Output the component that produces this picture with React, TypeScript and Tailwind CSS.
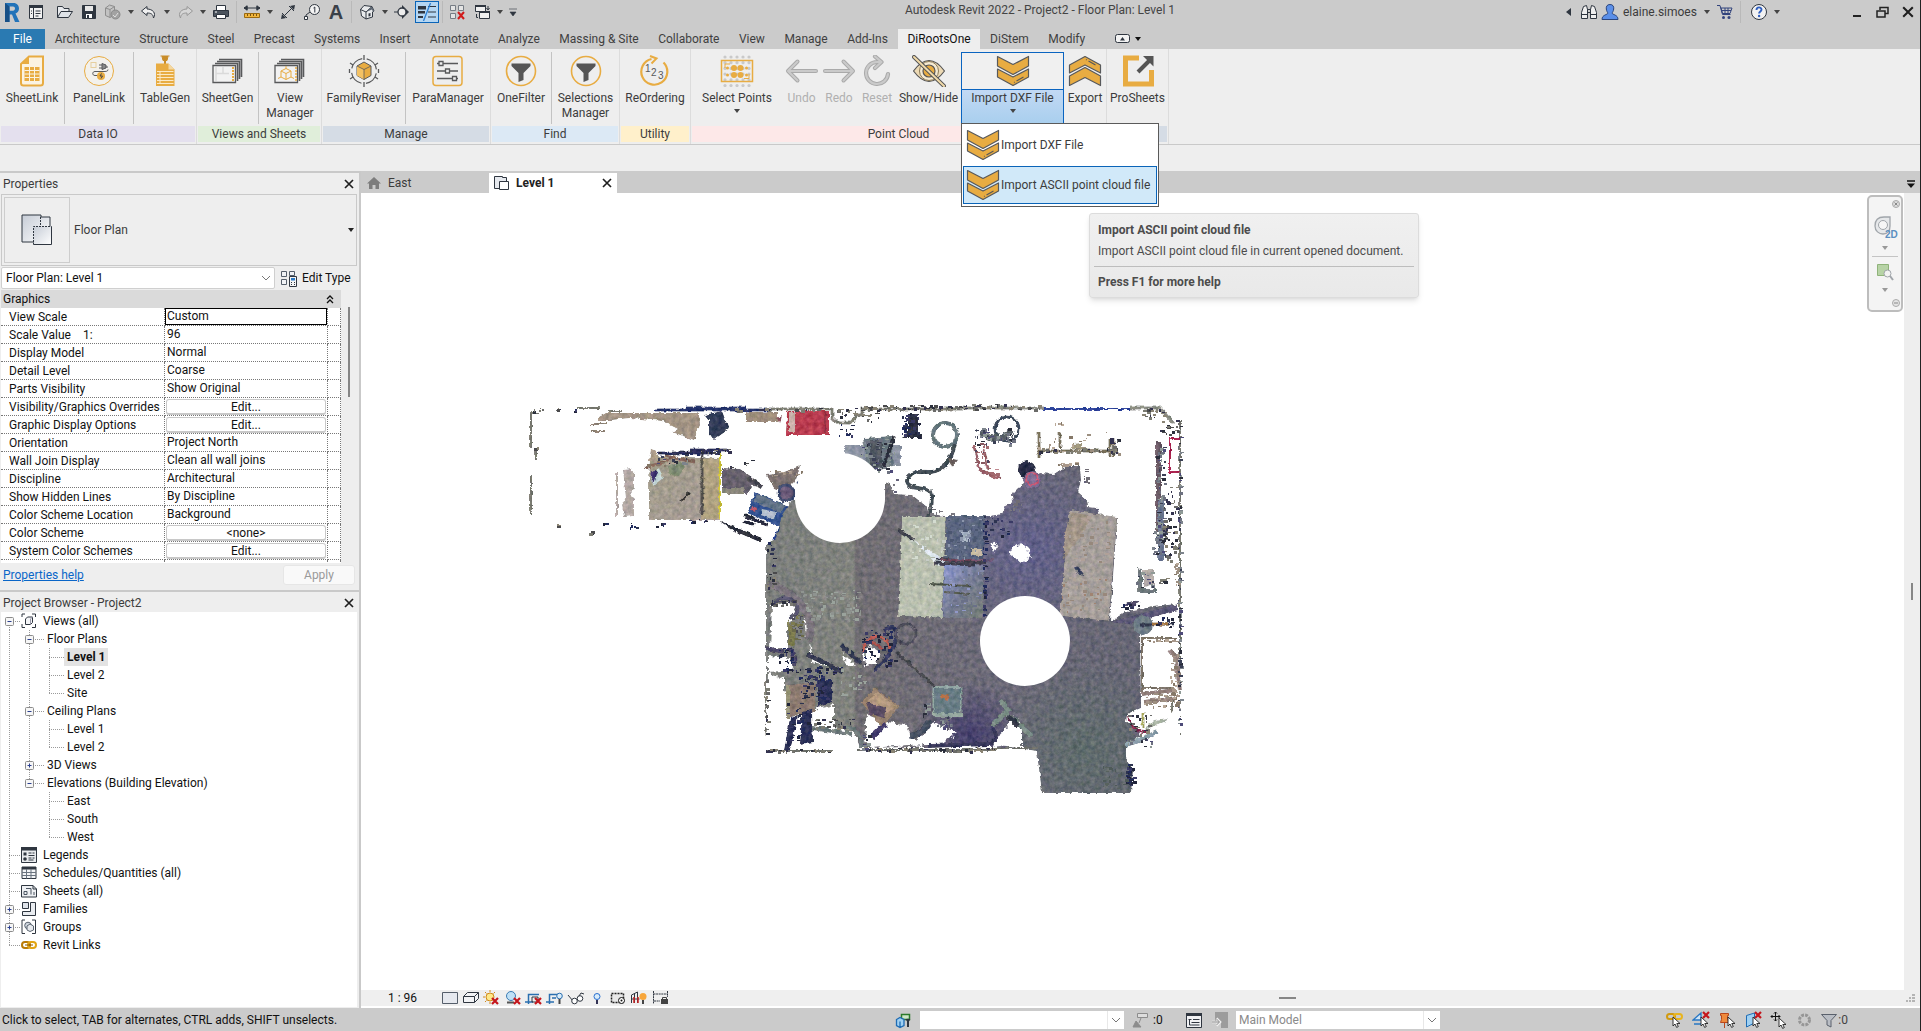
import React from "react";

type Kids = { children?: React.ReactNode };

function Svg({ w = 18, h = 18, vb, children }: Kids & { w?: number; h?: number; vb?: string }) {
  return (
    <svg width={w} height={h} viewBox={vb ?? `0 0 ${w} ${h}`} fill="none" aria-hidden="true" className="shrink-0">
      {children}
    </svg>
  );
}

const INK = "#2f3640";
const GOLD = "#e8ac42";
const GREY = "#58595b";

/* ---------- small shared marks ---------- */

const Tri = ({ c = "#444" }: { c?: string }) => (
  <Svg w={6} h={4}>
    <path d="M0 0h6L3 4z" fill={c} />
  </Svg>
);

const Close = ({ size = 10 }: { size?: number }) => (
  <Svg w={size} h={size} vb="0 0 10 10">
    <path d="M1 1l8 8M9 1L1 9" stroke="#1f1f1f" strokeWidth="1.7" />
  </Svg>
);

const Chevron = () => (
  <Svg w={10} h={6}>
    <path d="M1 1l4 4 4-4" stroke="#777" />
  </Svg>
);

const Cursor = ({ x = 8, y = 6 }: { x?: number; y?: number }) => (
  <path transform={`translate(${x} ${y})`} d="M0 0v9l2-2 1.6 3.4 1.7-.8L3.800 6.500H7z" fill="#fff" stroke="#222" strokeWidth=".9" />
);

const RedX = ({ x, y }: { x: number; y: number }) => (
  <path transform={`translate(${x} ${y})`} d="M0 0l6 6M6 0L0 6" stroke="#c4161c" strokeWidth="2.200" />
);

/* ---------- quick access toolbar ---------- */

const Q = {
  logo: (
    <Svg w={16} h={22}>
      <path d="M1 2h8.500C13 2 15 4.500 15 7.500c0 2.700-1.500 4.300-3.500 5L15.500 21H11L8 13.500H5.500V21H1z" fill="#2273b9" />
      <path d="M5.500 5.500H9c1.200 0 2 .8 2 2s-.8 2.300-2 2.300H5.500z" fill="#cbcbcb" />
      <path d="M1 2l4.500 3.500V21H1z" fill="#174f86" />
    </Svg>
  ),
  menu: (
    <Svg w={16} h={18}>
      <path d="M1.500 2.500h13v13h-13z" fill="#f2f2f2" stroke={INK} />
      <path d="M1 2h14v3H1z" fill={INK} />
      <path d="M5.500 5v10M7.500 8h5M7.500 10.500h5M7.500 13h3M3 8h1M3 10.500h1" stroke={INK} />
    </Svg>
  ),
  open: (
    <Svg w={18} h={16}>
      <path d="M1.500 13.500v-11h5l1.500 2h5v2.500" fill="#e9ebee" stroke={INK} />
      <path d="M1.500 13.500l3.500-6h11.500l-4 6z" fill="#dfe3e8" stroke={INK} />
    </Svg>
  ),
  save: (
    <Svg w={16} h={18}>
      <path d="M1.500 2.500h13v13h-13z" fill={INK} stroke={INK} />
      <path d="M4 3h8v5H4z" fill="#e8e8e8" />
      <path d="M5 11h6v4H5z" fill="#fff" />
      <path d="M6 12h2v3H6z" fill={INK} />
    </Svg>
  ),
  sync: (
    <Svg w={18} h={18}>
      <path d="M1.500 5l4-3 5 1.500v8l-4.500 3-4.500-2zM6 6.500v8M1.500 5L6 6.500l4.500-3" fill="#c2c2c2" stroke="#8d8d8d" />
      <circle cx="11.500" cy="11.500" r="4.500" fill="#a2a2a2" stroke="#8a8a8a" />
      <path d="M9 12l2 2 3-4" stroke="#dedede" />
    </Svg>
  ),
  undo: (
    <Svg w={18} h={16}>
      <path d="M7 2.500L1.500 7 7 11.500V9c4 0 6 1 6.500 5 3-5-1-9-6.500-9z" fill="#f0f0f0" stroke={INK} strokeLinejoin="round" />
    </Svg>
  ),
  redo: (
    <Svg w={18} h={16}>
      <path d="M11 2.500L16.500 7 11 11.500V9c-4 0-6 1-6.500 5-3-5 1-9 6.500-9z" fill="#d6d6d6" stroke="#989898" strokeLinejoin="round" />
    </Svg>
  ),
  print: (
    <Svg w={18} h={18}>
      <path d="M4.500 2.500h9v5h-9z" fill="#fff" stroke={INK} />
      <path d="M1.500 7.500h15v6h-15z" fill="#4c545e" stroke={INK} />
      <path d="M4.500 11.500h9v4h-9z" fill="#fff" stroke={INK} />
      <path d="M3 9h2" stroke="#fff" />
    </Svg>
  ),
  ruler: (
    <Svg w={18} h={16}>
      <path d="M1 4h16M4 1.500v5M14 1.500v5M1 4l3-2v4zM17 4l-3-2v4z" stroke={INK} fill={INK} />
      <path d="M1.500 9.500h15v4h-15z" fill="#f2b63d" stroke="#9a6a10" />
      <path d="M4.500 10v2M7.500 10v2M10.500 10v2M13.500 10v2" stroke="#7a5310" />
    </Svg>
  ),
  dim: (
    <Svg w={18} h={18}>
      <path d="M4 14L14 4M3 10l5 5M10 3l5 5" stroke={INK} />
      <path d="M2 16l1-5 4 4zM16 2l-1 5-4-4z" fill={INK} />
    </Svg>
  ),
  tag: (
    <Svg w={18} h={18}>
      <circle cx="11.500" cy="6.500" r="5" fill="#f4f4f4" stroke={INK} />
      <path d="M10.500 5l1.300-1v5.500M7 9l-4 3v3" stroke={INK} />
      <path d="M1.500 13.500h3v3h-3z" fill="#fff" stroke={INK} />
    </Svg>
  ),
  house: (
    <Svg w={18} h={18}>
      <path d="M2.500 6.500L6 2.500l8 1 2 4.500-1.500 1v5l-6.500 2-4.500-3z" fill="#e8eaec" stroke={INK} />
      <path d="M2.500 6.500L8 9l6-5.500M8 9v7" stroke={INK} />
      <path d="M8 9l6-5.500 2 4.500-1 1-1-2.500z" fill="#5c6570" />
      <path d="M10.500 10.500l2-.6v3l-2 .6z" fill={INK} />
    </Svg>
  ),
  section: (
    <Svg w={18} h={16}>
      <path d="M8 1l7 7-7 7z" fill={INK} />
      <circle cx="8" cy="8" r="4" fill="#ececec" stroke={INK} strokeWidth="1.300" />
      <path d="M0 8h4" stroke={INK} />
    </Svg>
  ),
  thin: (
    <Svg w={20} h={18}>
      <path d="M1 3h8v3.500H1zM1 8h7v2.500H1zM1 13h5v2H1z" fill={INK} />
      <path d="M11 3.500h8M11 9h8M11 14h8" stroke={INK} />
      <path d="M13.500 0L6.500 18" stroke="#2a7fd4" strokeWidth="1.300" />
    </Svg>
  ),
  closeHidden: (
    <Svg w={18} h={18}>
      <path d="M1.500 2.500h5v5h-5zM9.500 2.500h5v5h-5zM1.500 10.500h5v5h-5z" fill="#e4e4e4" stroke="#767c84" />
      <path d="M9 9l6 7M15 9l-6 7" stroke="#d11a1a" strokeWidth="2" />
    </Svg>
  ),
  switchWin: (
    <Svg w={18} h={18}>
      <path d="M2.500 2.500h10v6h-10zM6.500 8.500h10v7h-10z" fill="#f0f0f0" stroke={INK} />
      <path d="M2 2h11v2H2zM6 8h11v2H6z" fill={INK} />
      <path d="M15 3v3M13.500 5l1.500 2 1.500-2M3.500 11v3.500H5" stroke={INK} />
    </Svg>
  ),
};

function IconButton({ label, children, active }: Kids & { label: string; active?: boolean }) {
  return (
    <button
      aria-label={label}
      className={
        active
          ? "flex h-[22px] w-6 items-center justify-center border border-[#0a64b8] bg-[#b5d6f2]"
          : "flex h-[22px] w-6 items-center justify-center"
      }
    >
      {children}
    </button>
  );
}

const DropTri = ({ label }: { label: string }) => (
  <button aria-label={label} className="flex h-[22px] w-3 items-center justify-center">
    <Tri />
  </button>
);

const Sep = () => <span className="mx-[3px] h-[22px] w-px bg-[#b9b9b9]" />;

function TitleBar() {
  return (
    <header className="flex h-[29px] items-start justify-between bg-[#cbcbcb]">
      <div className="flex w-[520px] items-center pt-[1px]">
        <IconButton label="Revit">{Q.logo}</IconButton>
        <IconButton label="Recent files">{Q.menu}</IconButton>
        <span className="w-[5px]" />
        <IconButton label="Open">{Q.open}</IconButton>
        <IconButton label="Save">{Q.save}</IconButton>
        <IconButton label="Synchronize">{Q.sync}</IconButton>
        <DropTri label="Synchronize options" />
        <IconButton label="Undo action">{Q.undo}</IconButton>
        <DropTri label="Undo history" />
        <IconButton label="Redo action">{Q.redo}</IconButton>
        <DropTri label="Redo history" />
        <IconButton label="Print">{Q.print}</IconButton>
        <Sep />
        <IconButton label="Measure">{Q.ruler}</IconButton>
        <DropTri label="Measure options" />
        <IconButton label="Aligned dimension">{Q.dim}</IconButton>
        <IconButton label="Tag by category">{Q.tag}</IconButton>
        <button aria-label="Text" className="w-6 font-['Liberation_Sans'] text-[20px] leading-[22px] font-bold text-[#3a4048]">
          A
        </button>
        <Sep />
        <IconButton label="Default 3D view">{Q.house}</IconButton>
        <DropTri label="3D view options" />
        <IconButton label="Section">{Q.section}</IconButton>
        <IconButton label="Thin lines" active>{Q.thin}</IconButton>
        <Sep />
        <IconButton label="Close inactive views">{Q.closeHidden}</IconButton>
        <IconButton label="Switch windows">{Q.switchWin}</IconButton>
        <DropTri label="Switch windows options" />
        <button aria-label="Customize toolbar" className="ml-px flex w-3 justify-center">
          <Svg w={8} h={8}>
            <path d="M0 1h8M1 4h6L4 8z" fill={INK} stroke={INK} strokeWidth=".6" />
          </Svg>
        </button>
      </div>
      <h1 className="pt-[2px] text-[12px] leading-4 text-[#444]">Autodesk Revit 2022 - Project2 - Floor Plan: Level 1</h1>
      <div className="flex w-[360px] items-center pt-[1px]">
        <button aria-label="Collapse search" className="mr-[6px] ml-[6px]">
          <Svg w={5} h={8}>
            <path d="M5 0v8L0 4z" fill={INK} />
          </Svg>
        </button>
        <IconButton label="Search">
          <Svg w={18} h={18}>
            <path d="M3.500 3.500l3-1 1 4v9h-6v-6zM14.500 3.500l-3-1-1 4v9h6v-6z" fill="#efefef" stroke={INK} />
            <path d="M7.500 6.500h3v3h-3zM1.500 11.500h6M10.500 11.500h6" stroke={INK} />
          </Svg>
        </IconButton>
        <button className="flex h-[22px] w-[100px] items-center gap-1 text-[12px] text-[#3c3c3c]">
          <Svg w={18} h={18}>
            <path d="M9 1.500c3 0 4 2 3.700 4.500-.3 2-1.200 3.500-1.700 4 .5 2 6 1.500 6 6.500H1c0-5 5.500-4.500 6-6.500-.5-.5-1.400-2-1.700-4C5 3.500 6 1.500 9 1.500z" fill="#5b8fe8" stroke="#2b457c" />
          </Svg>
          elaine.simoes
        </button>
        <DropTri label="Account options" />
        <IconButton label="App store">
          <Svg w={18} h={18}>
            <path d="M1 2.500h3l2.500 9h8M5 5h11l-2 5.500H6.500zM6 7.500h9M9 5v5.500M12 5v5.500" stroke="#33447c" />
            <circle cx="7.500" cy="14.500" r="1.500" fill="#33447c" />
            <circle cx="13" cy="14.500" r="1.500" fill="#33447c" />
          </Svg>
        </IconButton>
        <Sep />
        <span className="w-[3px]" />
        <IconButton label="Help">
          <Svg w={18} h={18}>
            <circle cx="9" cy="9" r="7.500" fill="#f2f2f2" stroke={INK} />
            <path d="M6.500 7c0-3.500 5-3.300 5-.5 0 2-2.400 1.800-2.400 4" stroke="#2f5fc0" strokeWidth="1.900" />
            <circle cx="9.100" cy="13" r="1.200" fill="#2f5fc0" />
          </Svg>
        </IconButton>
        <DropTri label="Help options" />
        <div className="ml-auto flex items-center gap-[13px] pr-[6px]">
          <button aria-label="Minimize">
            <Svg w={10} h={12}>
              <path d="M0 10h8" stroke="#222" strokeWidth="2" />
            </Svg>
          </button>
          <button aria-label="Restore">
            <Svg w={13} h={12}>
              <path d="M4 4V1.500h8v6H9" stroke="#222" strokeWidth="1.500" />
              <path d="M1 5h8v6H1z" stroke="#222" strokeWidth="1.500" />
            </Svg>
          </button>
          <button aria-label="Close window">
            <Close size={12} />
          </button>
        </div>
      </div>
    </header>
  );
}

const TABS = [
  "Architecture", "Structure", "Steel", "Precast", "Systems", "Insert", "Annotate", "Analyze", "Massing & Site",
  "Collaborate", "View", "Manage", "Add-Ins", "DiRootsOne", "DiStem", "Modify",
];

function RibbonTabs() {
  return (
    <nav className="flex h-5 bg-[#cbcbcb] text-[12px] text-[#3f3f3f]">
      <button className="w-[45px] bg-[#2a7ab2] text-white">File</button>
      <div className="flex w-[1050px]">
        {TABS.map((t) => (
          <button
            key={t}
            className={
              t === "DiRootsOne"
                ? "flex-auto bg-[#eeeeee] text-center whitespace-nowrap text-[#111]"
                : "flex-auto text-center whitespace-nowrap"
            }
          >
            {t}
          </button>
        ))}
      </div>
      <button aria-label="Minimize ribbon" className="ml-5 flex items-center gap-1">
        <Svg w={16} h={10}>
          <rect x=".5" y=".5" width="14" height="8" rx="2" fill="#f2f2f2" stroke={INK} />
          <path d="M5 6.500h5L7.500 3z" fill={INK} />
        </Svg>
        <Tri c="#111" />
      </button>
    </nav>
  );
}

/* ---------- ribbon icons, 34 x 32 ---------- */

const Chevrons = ({ up }: { up?: boolean }) => (
  <Svg w={34} h={32}>
    <g transform={up ? "translate(0 32) scale(1 -1)" : undefined} fill={GOLD} stroke={GREY} strokeWidth="1.200" strokeLinejoin="round">
      <path d="M1.500 1.500L17 9.500l15.500-8v9.500L17 19.500 1.500 11z" />
      <path d="M1.500 14L17 22l15.500-8v8L17 30.500 1.500 22z" />
      <path d="M20.500 26l7-4M18 27.500l.7-.4" fill="none" />
    </g>
  </Svg>
);

const FilterIcon = () => (
  <Svg w={34} h={32}>
    <circle cx="17" cy="16" r="14.500" stroke={GOLD} strokeWidth="1.600" />
    <path d="M7.500 8.500h19v2.500l-7 7V25l-5 2v-9l-7-7z" fill="#555" />
  </Svg>
);

const Pages = ({ children }: Kids) => (
  <Svg w={34} h={32}>
    <path d="M8 4.500h22.500V22M6 6.500h22.500V24M4 8.500h22.500V26" stroke={GREY} strokeWidth="1.600" />
    <path d="M2 10.500h22.500v17H2z" fill="#f2f2f2" stroke={GREY} strokeWidth="1.300" />
    {children}
  </Svg>
);

const Sliders = () => (
  <Svg w={34} h={32}>
    <rect x="2" y="1.500" width="29" height="29" rx="3" stroke={GOLD} strokeWidth="1.500" />
    <path d="M6 8.500h21M6 16h21M6 23.500h21" stroke={GREY} strokeWidth="1.600" />
    <path d="M8 6.500h4v4H8zM14.500 14h4v4h-4zM21.500 21.500h4v4h-4z" fill="#eee" stroke={GREY} strokeWidth="1.300" />
  </Svg>
);

const R: Record<string, React.ReactNode> = {
  SheetLink: (
    <Svg w={34} h={32}>
      <path d="M6 9l8-7.500h14V28q0 2.500-2.500 2.500h-17Q6 30.500 6 28z" fill="#fbf3e2" stroke={GOLD} strokeWidth="2" />
      <path d="M6 9l8-7.500V9z" fill={GOLD} />
      <path d="M9.500 12h15v14h-15z" fill={GOLD} />
      <path d="M9.500 15.500h15M9.500 19h15M9.500 22.500h15M14.500 12v14M19.500 12v14" stroke="#fbf3e2" />
    </Svg>
  ),
  PanelLink: (
    <Svg w={34} h={32}>
      <circle cx="17" cy="16" r="14.500" fill="#f3f1ec" stroke={GOLD} />
      <rect x="9" y="7.500" width="5" height="5" stroke="#e6cf9f" />
      <path d="M17 10h3M17 13h3M26 12h-2M20 8.500l4 1.500v3l-4 1.500z" stroke={GREY} fill="#888" />
      <path d="M26 14.500c0 2-2 2-5 2H13c-3 0-3 4 0 4h3" stroke={GREY} />
      <circle cx="19" cy="21" r="4" fill={GOLD} />
      <path d="M19.500 18.500L18 21h2.500L19 23.500" stroke="#444" />
    </Svg>
  ),
  TableGen: (
    <Svg w={34} h={32}>
      <path d="M12.500 1h9M14 1.500h6l-1 4h-4z" fill="#c98d2a" stroke="#c98d2a" />
      <path d="M17 5v4" stroke="#c98d2a" strokeWidth="2" />
      <path d="M8 8.500h12.500l6 6V31H8z" fill={GOLD} />
      <path d="M20.500 8.500v6h6z" fill="#f4d8a2" />
      <path d="M9 16.500h16.500M9 19.500h16.500M9 22.500h16.500M9 25.500h16.500M9 28.500h16.500M12 16.500v12" stroke="#fbe9c6" />
    </Svg>
  ),
  SheetGen: (
    <Pages>
      <path d="M5 12v14M5 18.500h13M12 12v6" stroke="#dadada" strokeWidth="1.500" />
      <path d="M22 12v14" stroke={GOLD} strokeWidth="2" strokeDasharray="2 1" />
    </Pages>
  ),
  View: (
    <Pages>
      <path d="M13 13.500l5 2.500v6l-5 2.500L8 22v-6zM8 16l5 2.500 5-2.500M13 18.500v6M13 11v2.500M18 22l3 1.500M8 22l-3 1.500" stroke={GOLD} />
      <path d="M23 12v14" stroke={GOLD} strokeWidth="1.500" strokeDasharray="2 1" />
    </Pages>
  ),
  FamilyReviser: (
    <Svg w={34} h={32}>
      <circle cx="17" cy="16" r="12.500" stroke={GREY} strokeWidth="1.200" strokeDasharray="15 4.600" strokeDashoffset="-2.500" />
      <path d="M17 0v5M17 27v5M3 8l3 2M31 8l-3 2M3 24l3-2M31 24l-3-2M2.500 14v4M31.500 14v4" stroke={GREY} strokeWidth="1.300" />
      <path d="M17 7l7 4v9.500l-7 4-7-4V11z" fill={GOLD} stroke={GREY} />
      <path d="M10 11l7 3.500v10l-7-4z" fill="#f4c264" />
      <path d="M10 11l7 3.500 7-3.500M17 14.500v10" stroke={GREY} strokeWidth=".8" />
    </Svg>
  ),
  ParaManager: <Sliders />,
  OneFilter: <FilterIcon />,
  Selections: <FilterIcon />,
  ReOrdering: (
    <Svg w={34} h={32}>
      <path d="M25.500 7.500a13 13 0 1 1-12-3.500" stroke={GOLD} strokeWidth="2.200" />
      <path d="M12 1l6.500 2.500-5 5" stroke={GOLD} strokeWidth="2" />
      <g fill={GREY} fontFamily="Liberation Sans" fontSize="10">
        <text x="7" y="17">1</text>
        <text x="13" y="21">2</text>
        <text x="20" y="24">3</text>
      </g>
    </Svg>
  ),
  "Select Points": (
    <Svg w={34} h={32}>
      <g fill="#c9c9c9">
        {[0, 1, 2, 3, 4].map((c) =>
          [0, 1, 2, 3, 4, 5].map((r) => <circle key={`${c}-${r}`} cx={5 + c * 6} cy={2 + r * 5.700} r="1.600" />),
        )}
      </g>
      <path d="M1.500 5.500h31v21h-31z" stroke={GOLD} strokeWidth="1.500" />
      <path d="M10 9H5v4M24 23.500h5V19" stroke={GOLD} />
      <g fill={GOLD}>
        <circle cx="14" cy="13" r="3" /><circle cx="20.500" cy="13" r="3" />
        <circle cx="14" cy="20" r="3" /><circle cx="20.500" cy="20" r="3" />
        <circle cx="7.500" cy="13" r="1.500" /><circle cx="26.500" cy="13" r="1.500" />
        <circle cx="7.500" cy="20" r="1.500" /><circle cx="26.500" cy="20" r="1.500" />
      </g>
    </Svg>
  ),
  Undo: (
    <Svg w={34} h={32}>
      <path d="M31 16H4M12.500 6.500L3 16l9.500 9.500" stroke="#aaa" strokeWidth="4" strokeLinecap="round" strokeLinejoin="round" />
      <path d="M31 16H4M12.500 6.500L3 16l9.500 9.500" stroke="#cacaca" strokeWidth="2" strokeLinecap="round" strokeLinejoin="round" />
    </Svg>
  ),
  Redo: (
    <Svg w={34} h={32}>
      <path d="M3 16h27M21.500 6.500L31 16l-9.500 9.500" stroke="#aaa" strokeWidth="4" strokeLinecap="round" strokeLinejoin="round" />
      <path d="M3 16h27M21.500 6.500L31 16l-9.500 9.500" stroke="#cacaca" strokeWidth="2" strokeLinecap="round" strokeLinejoin="round" />
    </Svg>
  ),
  Reset: (
    <Svg w={34} h={32}>
      <path d="M28 19a11 11 0 1 1-11-12h4M15 1.500L21.500 7 15 13" stroke="#aaa" strokeWidth="4.200" strokeLinecap="round" strokeLinejoin="round" />
      <path d="M28 19a11 11 0 1 1-11-12h4M15 1.500L21.500 7 15 13" stroke="#cacaca" strokeWidth="2.200" strokeLinecap="round" strokeLinejoin="round" />
    </Svg>
  ),
  "Show/Hide": (
    <Svg w={34} h={32}>
      <path d="M1.500 16q15.500-21 31 0-15.500 21-31 0z" fill="#ecd9b4" stroke="#555" strokeWidth="1.200" />
      <circle cx="17" cy="16" r="9.500" fill="#f5ead2" stroke="#8a7a58" />
      <circle cx="17" cy="16" r="6" fill={GOLD} stroke="#555" strokeWidth="1.200" />
      <path d="M2 2l30 29" stroke="#555" strokeWidth="4" strokeLinecap="round" />
      <path d="M2 2l30 29" stroke="#f0d9a8" strokeWidth="2" strokeLinecap="round" />
    </Svg>
  ),
  "Import DXF File": <Chevrons />,
  Export: <Chevrons up />,
  ProSheets: (
    <Svg w={34} h={32}>
      <path d="M18 3H4.500v26h26V15" stroke={GOLD} strokeWidth="5" />
      <path d="M17 17L29 5" stroke="#555" strokeWidth="4" />
      <path d="M22 1h10.500v10.500z" fill="#555" />
    </Svg>
  ),
};

type Tool = { name: string; second?: string; w: string; off?: boolean; drop?: boolean; line?: boolean };

const GROUPS: { label: string; w: string; bg: string; tools: Tool[] }[] = [
  { label: "Data IO", w: "w-[197px]", bg: "bg-[#e4e0ee]", tools: [
    { name: "SheetLink", w: "w-[65px]", line: true }, { name: "PanelLink", w: "w-[69px]", line: true }, { name: "TableGen", w: "w-[62px]" } ] },
  { label: "Views and Sheets", w: "w-[125px]", bg: "bg-[#e0eeda]", tools: [
    { name: "SheetGen", w: "w-[62px]", line: true }, { name: "View", second: "Manager", w: "w-[62px]" } ] },
  { label: "Manage", w: "w-[169px]", bg: "bg-[#d5dce5]", tools: [
    { name: "FamilyReviser", w: "w-[84px]", line: true }, { name: "ParaManager", w: "w-[84px]" } ] },
  { label: "Find", w: "w-[129px]", bg: "bg-[#dce9f5]", tools: [
    { name: "OneFilter", w: "w-[61px]", line: true }, { name: "Selections", second: "Manager", w: "w-[67px]" } ] },
  { label: "Utility", w: "w-[71px]", bg: "bg-[#fff0cb]", tools: [{ name: "ReOrdering", w: "w-[70px]" }] },
  { label: "Point Cloud", w: "w-[416px]", bg: "bg-[#fde8e8]", tools: [
    { name: "Select Points", w: "w-[92px]", drop: true }, { name: "Undo", w: "w-[37px]", off: true },
    { name: "Redo", w: "w-[38px]", off: true }, { name: "Reset", w: "w-[38px]", off: true },
    { name: "Show/Hide", w: "w-[65px]" }, { name: "Import DXF File", w: "w-[103px]", drop: true }, { name: "Export", w: "w-[42px]" } ] },
  { label: "", w: "w-[62px]", bg: "bg-[#d5dce5]", tools: [{ name: "ProSheets", w: "w-[61px]" }] },
];

function ToolButton({ t }: { t: Tool }) {
  const text = (
    <>
      {t.name}
      {t.second && <span className="block">{t.second}</span>}
    </>
  );
  if (t.name === "Import DXF File") {
    return (
      <div className="relative h-[72px] w-[103px]">
        <button className="flex h-full w-full flex-col border border-[#0a64c0] text-[12px] leading-[15px] text-[#3c3c3c]">
          <span className="flex h-[37px] w-full items-center justify-center border-b border-[#0a64c0] bg-[#f0f0f0]">{R[t.name]}</span>
          <span className="flex w-full flex-1 flex-col items-center gap-[3px] bg-linear-to-b from-[#c2d9f4] to-[#a9cfee] pt-px">
            {text}
            <Tri />
          </span>
        </button>
        <ImportMenu />
      </div>
    );
  }
  return (
    <div className={`${t.w} flex h-[72px] shrink-0`}>
      <button
        disabled={t.off}
        className={`flex min-w-0 flex-1 flex-col items-center pt-[3px] text-[12px] leading-[15px] whitespace-nowrap ${t.off ? "text-[#b0b0b0]" : "text-[#3c3c3c]"}`}
      >
        <span className="mb-1 flex justify-center">{R[t.name]}</span>
        <span>{text}</span>
        {t.drop && (
          <span className="mt-[3px]">
            <Tri />
          </span>
        )}
      </button>
      {t.line && <span className="w-px bg-[#c3c3c3]" />}
    </div>
  );
}

function ImportMenu() {
  return (
    <div role="menu" className="absolute top-[71px] left-0 z-20 flex h-[84px] w-[198px] flex-col border border-[#5a5a5a] bg-white text-[12px] text-[#3c3c3c]">
      <button role="menuitem" className="flex h-[42px] items-center gap-px pl-1 whitespace-nowrap">
        <Chevrons />
        Import DXF File
      </button>
      <button role="menuitem" className="mx-px flex h-[38px] items-center gap-px border border-[#0a64b8] bg-[#d1e9f9] pl-[2px] whitespace-nowrap">
        <Chevrons />
        Import ASCII point cloud file
      </button>
      <div role="tooltip" className="absolute top-[89px] left-[127px] w-[330px] rounded-[3px] border border-[#dcdcdc] bg-linear-to-b from-[#f0f0f0] to-[#e9e9e9] px-2 pt-2 pb-[7px] text-[12px] leading-4 text-[#4c4c4c] shadow-md">
        <p className="font-bold">Import ASCII point cloud file</p>
        <p className="mt-[5px] whitespace-nowrap">Import ASCII point cloud file in current opened document.</p>
        <hr className="-mx-1 my-[7px] border-[#bdbdbd]" />
        <p className="font-bold">Press F1 for more help</p>
      </div>
    </div>
  );
}

function Ribbon() {
  return (
    <section aria-label="Ribbon" className="flex h-24 border-b border-[#c9c9c9] bg-[#eeeeee]">
      {GROUPS.map((g, i) => (
        <div key={i} className={`${g.w} flex shrink-0 flex-col border-r border-[#dcdcdc] pt-[3px]`}>
          <div className="flex">{g.tools.map((t) => <ToolButton key={t.name} t={t} />)}</div>
          <div className={`${g.bg} mx-px mt-[2px] h-4 text-center text-[12px] leading-4 text-[#3c3c3c]`}>{g.label}</div>
        </div>
      ))}
    </section>
  );
}

/* ---------- left side ---------- */

const PROPS: [string, string, "edit"?][] = [
  ["View Scale", "Custom"], ["Scale Value    1:", "96"], ["Display Model", "Normal"], ["Detail Level", "Coarse"],
  ["Parts Visibility", "Show Original"], ["Visibility/Graphics Overrides", "Edit...", "edit"],
  ["Graphic Display Options", "Edit...", "edit"], ["Orientation", "Project North"],
  ["Wall Join Display", "Clean all wall joins"], ["Discipline", "Architectural"], ["Show Hidden Lines", "By Discipline"],
  ["Color Scheme Location", "Background"], ["Color Scheme", "<none>", "edit"], ["System Color Schemes", "Edit...", "edit"],
];

function Properties() {
  return (
    <section aria-label="Properties" className="flex flex-col bg-[#eeeeee] text-[12px] text-[#111]">
      <div className="flex h-[21px] items-center justify-between pr-[5px] pl-[3px] text-[#3c3c3c]">
        <h2>Properties</h2>
        <button aria-label="Close properties"><Close /></button>
      </div>
      <div className="mr-[2px] ml-px flex h-[72px] items-center border border-[#c9c9c9] pl-[2px] text-[#3c3c3c]">
        <span className="flex h-[66px] w-[66px] items-center justify-center border border-[#cdcdcd]">
          <Svg w={32} h={32}>
            <defs>
              <linearGradient id="pg" x1="0" y1="0" x2="1" y2="1"><stop stopColor="#c6ccd6" /><stop offset="1" stopColor="#fff" /></linearGradient>
            </defs>
            <path d="M1 1h19v2h9v26H20v-1H1z" fill="url(#pg)" stroke={INK} />
            <path d="M12.500 12.500h18v18h-18z" fill="url(#pg)" />
            <path d="M12.500 28V12.500h18M19.500 3v9" stroke={INK} strokeDasharray="2 1" />
            <path d="M30.500 12.500v18h-18v-2" stroke={INK} />
          </Svg>
        </span>
        <span className="ml-1 flex-1">Floor Plan</span>
        <button aria-label="Change type" className="pr-[2px]"><Tri c="#222" /></button>
      </div>
      <div className="flex h-6 items-center pl-px">
        <div className="relative w-[274px]">
          <select aria-label="Instance" className="h-[22px] w-full appearance-none rounded-[2px] border border-[#cfcfcf] bg-white pl-1 text-[12px]">
            <option>Floor Plan: Level 1</option>
          </select>
          <span className="pointer-events-none absolute top-2 right-1"><Chevron /></span>
        </div>
        <button className="ml-[5px] flex items-center gap-[5px]">
          <Svg w={17} h={17}>
            <path d="M1.500 1.500h5v5h-5zM9.500 1.500h5v4h-5zM1.500 9.500h5v5h-5z" fill="#f0f2f5" stroke="#555e6a" />
            <path d="M9.500 6.500h7v10h-7z" fill="#f4f4f4" stroke={INK} />
            <path d="M11 8h4v2.500h-4z" fill="#2a78c4" />
            <path d="M11 12.500h1M14 12.500h1M11 14.500h1M14 14.500h1" stroke={INK} />
          </Svg>
          Edit Type
        </button>
      </div>
      <div className="mx-px flex h-[273px] overflow-hidden">
        <table className="h-fit w-[340px] table-fixed border-separate border-spacing-0 bg-white">
          <colgroup>
            <col className="w-[164px]" />
            <col className="w-[163px]" />
            <col className="w-[13px]" />
          </colgroup>
          <thead>
            <tr className="h-[18px] bg-[#dadada]">
              <th colSpan={2} className="h-[18px] p-0 pl-[2px] text-left leading-[18px] font-normal">Graphics</th>
              <th className="p-0">
                <button aria-label="Collapse Graphics" className="-ml-[2px] block">
                  <Svg w={8} h={9}>
                    <path d="M1 4l3-3 3 3M1 8l3-3 3 3" stroke="#111" strokeWidth="1.300" />
                  </Svg>
                </button>
              </th>
            </tr>
          </thead>
          <tbody>
            {PROPS.map(([k, v, e], i) => (
              <tr key={k}>
                <th scope="row" className="h-[18px] border-r border-b border-dotted border-[#777] p-0 pl-2 text-left leading-[16px] font-normal whitespace-pre">{k}</th>
                <td className="h-[18px] border-r border-b border-dotted border-[#777] p-0 leading-[16px]">
                  {e ? (
                    <button className="mx-px block h-4 w-[160px] rounded-[3px] border border-b-2 border-[#c8c8c8] bg-white text-center leading-[14px]">{v}</button>
                  ) : i === 0 ? (
                    <span className="block h-[17px] border border-black pl-px leading-[15px]">{v}</span>
                  ) : (
                    <span className="block h-[17px] pl-[2px] whitespace-nowrap">{v}</span>
                  )}
                </td>
                <td className="border-r border-b border-dotted border-[#777] p-0" />
              </tr>
            ))}
            <tr>
              <td className="h-1 border-r border-dotted border-[#777] p-0" />
              <td className="border-r border-dotted border-[#777] p-0" />
              <td className="border-r border-dotted border-[#777] p-0" />
            </tr>
          </tbody>
        </table>
        <div className="mt-[17px] ml-[7px] h-[90px] w-[2px] bg-[#868686]" />
      </div>
      <div className="flex h-[27px] items-start justify-between pt-[2px] pr-1 pl-[3px]">
        <a href="#help" className="leading-5 text-[#0a66c8] underline">Properties help</a>
        <button disabled className="h-5 w-[72px] rounded-[3px] border border-[#e6e6e6] bg-[#f9f9f9] text-[#9a9a9a]">Apply</button>
      </div>
    </section>
  );
}

const TI = {
  views: (
    <Svg w={16} h={16}>
      <path d="M4 1H1v3M1 11v3.500h3M11 1h3.500v3M14.500 11v3.500H11" stroke={INK} />
      <path d="M4.500 6l2-2h5v5.500l-2 2h-5z" fill="#f4f5f7" stroke={INK} />
      <path d="M9.500 11.500V6l2-2" stroke="#99a" />
    </Svg>
  ),
  legends: (
    <Svg w={16} h={16}>
      <path d="M.5.500h15v15H.5z" fill="#e9ebee" stroke={INK} />
      <path d="M0 0h16v3.500H0zM2.500 5.500h3v3h-3z" fill={INK} />
      <circle cx="4" cy="12" r="1.800" fill={INK} />
      <path d="M7.500 6h3M11.500 6h2M7.500 8.500h6M7.500 11h3M11.500 11h2M7.500 13h5" stroke={INK} />
    </Svg>
  ),
  schedules: (
    <Svg w={16} h={14}>
      <path d="M1 1h14v11.500H1z" fill="#f3f4f6" stroke={INK} />
      <path d="M1 1h14v2.500H1z" fill={INK} />
      <path d="M1 6.500h14M1 9.500h14M5.500 3v9.500M10 3v9.500" stroke="#6b7480" />
    </Svg>
  ),
  sheets: (
    <Svg w={16} h={14}>
      <path d="M.5 1.500H12l3.500 3.500v8H.5z" fill="#eef0f3" stroke={INK} />
      <path d="M3 10.500v-3h3v3zM5 4.500h5v6M13 8v3" stroke="#4b5561" />
      <path d="M12 1.500V5h3.500" stroke={INK} />
    </Svg>
  ),
  families: (
    <Svg w={16} h={16}>
      <path d="M1.500 1.500h6v6h-6z" fill="#dfe3e9" stroke={INK} />
      <path d="M9.500 1.500h5v13h-13v-4h8z" fill="#e9ecf0" stroke={INK} />
    </Svg>
  ),
  groups: (
    <Svg w={16} h={16}>
      <path d="M4 1H1v13.500h3M11 1h3.500v13.500H11" stroke={INK} />
      <circle cx="7" cy="6.500" r="3.300" fill="#cfd6de" stroke="#5a6470" />
      <path d="M6 7l3-2 3.500 2v4L9 12.500 6 11z" fill="#e6e9ed" stroke="#5a6470" />
    </Svg>
  ),
  links: (
    <Svg w={16} h={8}>
      <rect x="1" y="1" width="8" height="6" rx="3" stroke="#b97a05" strokeWidth="2" />
      <rect x="7" y="1" width="8" height="6" rx="3" stroke="#e2a514" strokeWidth="2" />
      <path d="M4 4h8" stroke="#8b5b00" />
    </Svg>
  ),
};

type Row = { d: number; t: string; x?: "+" | "-"; i?: React.ReactNode; sel?: boolean; last?: boolean };

const TREE: Row[] = [
  { d: 0, t: "Views (all)", x: "-", i: TI.views },
  { d: 1, t: "Floor Plans", x: "-" },
  { d: 2, t: "Level 1", sel: true }, { d: 2, t: "Level 2" }, { d: 2, t: "Site", last: true },
  { d: 1, t: "Ceiling Plans", x: "-" },
  { d: 2, t: "Level 1" }, { d: 2, t: "Level 2", last: true },
  { d: 1, t: "3D Views", x: "+" },
  { d: 1, t: "Elevations (Building Elevation)", x: "-", last: true },
  { d: 2, t: "East" }, { d: 2, t: "South" }, { d: 2, t: "West", last: true },
  { d: 0, t: "Legends", i: TI.legends }, { d: 0, t: "Schedules/Quantities (all)", i: TI.schedules },
  { d: 0, t: "Sheets (all)", i: TI.sheets }, { d: 0, t: "Families", x: "+", i: TI.families },
  { d: 0, t: "Groups", x: "+", i: TI.groups }, { d: 0, t: "Revit Links", i: TI.links, last: true },
];

function TreeLines({ r, n }: { r: Row; n: number }) {
  const w = r.d === 0 ? 20 : r.d === 1 ? 43 : 63;
  const px = 8 + 20 * r.d;
  const underViews = n > 0 && n < 10;
  return (
    <Svg w={w} h={18}>
      <g stroke="#9a9a9a" strokeDasharray="1 1" shapeRendering="crispEdges">
        {r.d > 0 && <path d="M8.500 0v18" />}
        {r.d > 1 && underViews && <path d="M28.500 0v18" />}
        <path d={`M${px + 0.5} ${n === 0 ? 9 : 0}V${r.last ? 9 : 18}M${px} 9.500H${w}`} />
      </g>
      {r.x && (
        <>
          <rect x={px - 3.500} y="5.500" width="8" height="8" rx="1" fill="#f6f6f6" stroke="#8c8c8c" />
          <path d={`M${px - 1.500} 9.500h4${r.x === "+" ? `M${px + 0.5} 7.500v4` : ""}`} stroke="#2a3f8f" />
        </>
      )}
    </Svg>
  );
}

function Browser() {
  return (
    <section aria-label="Project Browser" className="flex min-h-0 flex-1 flex-col border-t-2 border-[#c9c9c9] bg-[#eeeeee] text-[12px]">
      <div className="flex h-5 shrink-0 items-center justify-between pt-px pr-[5px] pl-[3px] text-[#3c3c3c]">
        <h2>Project Browser - Project2</h2>
        <button aria-label="Close project browser"><Close /></button>
      </div>
      <ul role="tree" className="mr-[2px] mb-px ml-px flex-1 bg-white text-[#111]">
        {TREE.map((r, n) => (
          <li key={n} role="treeitem" aria-level={r.d + 1} className="flex h-[18px] items-center whitespace-nowrap">
            <TreeLines r={r} n={n} />
            {r.i && <span className="mr-[5px] flex w-4 justify-center">{r.i}</span>}
            <span className={r.sel ? "bg-[#e3e3e3] px-[3px] leading-[18px] font-bold" : r.d === 0 ? "pl-px" : "pl-[3px]"}>{r.t}</span>
          </li>
        ))}
      </ul>
    </section>
  );
}

/* ---------- point cloud ---------- */

function rng(seed: number) {
  let s = seed;
  return () => {
    s = (s * 1664525 + 1013904223) % 4294967296;
    return s / 4294967296;
  };
}

const DARK = ["#2b2f3c", "#4a4a4c", "#33324f", "#6a6a68", "#8a8474", "#7c7c72"];
const NAVY = ["#1f2a5c", "#2c3350", "#3a3a66", "#20243a"];
const TAN = ["#9c8f80", "#a8978a", "#857868", "#b8a898"];
const MIX = ["#3a3f55", "#6d7180", "#8f9a96", "#4d4a78", "#2a2d3a", "#7d848c"];
const GROUND = ["#6f6c74", "#64627a", "#7a7880"];

/* x, y, width, height, count, palette */
const DEBRIS: [number, number, number, number, number, string[]][] = [
  [530, 407, 12, 4, 5, DARK], [555, 408, 6, 3, 4, DARK], [573, 408, 5, 3, 3, NAVY], [530, 446, 8, 4, 4, DARK],
  [556, 524, 4, 4, 3, DARK], [602, 522, 5, 3, 3, NAVY], [588, 530, 4, 3, 3, DARK], [630, 523, 7, 5, 5, NAVY],
  [656, 522, 10, 5, 6, NAVY], [688, 519, 18, 4, 8, NAVY], [656, 450, 70, 4, 34, NAVY], [654, 456, 34, 8, 18, MIX],
  [646, 460, 26, 7, 14, TAN], [700, 448, 28, 5, 12, DARK], [724, 460, 34, 8, 7, DARK], [766, 470, 36, 6, 18, TAN],
  [735, 408, 92, 2, 24, DARK], [860, 405, 106, 5, 80, DARK], [970, 404, 70, 5, 44, DARK], [1140, 408, 24, 10, 24, DARK],
  [1160, 420, 20, 14, 20, DARK], [862, 412, 16, 9, 12, DARK], [902, 414, 18, 22, 34, NAVY], [836, 408, 26, 8, 18, DARK],
  [838, 424, 14, 14, 10, NAVY], [860, 438, 36, 34, 60, MIX], [974, 428, 40, 16, 50, MIX],
  [974, 442, 14, 22, 20, ["#a36b70", "#4d4560", "#875860"]], [984, 466, 14, 10, 10, ["#c08890", "#a36b70"]],
  [1038, 432, 80, 22, 26, TAN], [1038, 447, 82, 5, 38, DARK], [1110, 438, 8, 16, 16, DARK], [1054, 420, 10, 4, 5, TAN],
  [1156, 442, 8, 100, 80, MIX], [1162, 484, 14, 76, 60, DARK], [1152, 530, 12, 26, 30, MIX],
  [1178, 424, 2, 310, 100, MIX], [1136, 570, 16, 18, 14, MIX], [1158, 576, 8, 8, 10, DARK], [1174, 562, 4, 22, 14, TAN],
  [1120, 602, 18, 6, 12, NAVY], [766, 540, 8, 26, 10, NAVY], [766, 570, 10, 20, 16, DARK], [768, 597, 26, 8, 24, DARK],
  [790, 614, 12, 26, 36, ["#7e7c50", "#4d4c58", "#6b6a4a"]], [778, 648, 16, 16, 24, NAVY], [782, 666, 58, 6, 40, NAVY], [798, 674, 32, 24, 66, NAVY],
  [786, 702, 26, 38, 34, NAVY], [812, 718, 42, 10, 34, DARK], [766, 749, 66, 2, 26, DARK], [862, 747, 134, 4, 90, DARK],
  [858, 735, 10, 14, 16, MIX], [765, 680, 2, 54, 20, DARK], [860, 630, 34, 36, 60, NAVY], [922, 702, 6, 14, 12, MIX],
  [936, 716, 18, 12, 16, MIX], [1128, 714, 22, 26, 24, DARK], [1126, 738, 26, 8, 14, MIX], [1126, 764, 7, 20, 50, NAVY],
  [1144, 639, 32, 2, 14, TAN], [1170, 654, 8, 50, 34, TAN], [1144, 692, 32, 14, 34, TAN], [1154, 616, 20, 12, 14, NAVY],
  [886, 478, 10, 16, 10, GROUND], [922, 506, 30, 10, 12, GROUND], [986, 518, 24, 18, 16, NAVY],
  [1010, 500, 14, 14, 14, GROUND], [1056, 462, 20, 4, 12, TAN], [1080, 468, 8, 20, 8, GROUND],
  [906, 520, 38, 40, 34, ["#d4dcd0", "#aeb4a8", "#c6ccc6"]], [946, 518, 38, 40, 70, ["#8c96ac", "#4b5670", "#5d6884"]],
  [983, 516, 2, 100, 50, NAVY], [948, 568, 34, 44, 40, ["#8288a8", "#6a7088", "#9098c8"]], [1068, 515, 42, 50, 40, ["#b0a098", "#96887c", "#a8a09c"]],
  [1062, 575, 44, 36, 44, ["#a08472", "#b0a49a", "#98887c"]], [800, 590, 60, 30, 70, ["#9aa39c", "#8f9490"]],
  [834, 650, 30, 44, 34, ["#9aa39c", "#7d8078"]], [1100, 765, 28, 24, 20, ["#4e5a58", "#58625e"]],
];

function Debris() {
  const r = rng(7);
  const out: React.ReactNode[] = [];
  DEBRIS.forEach(([x, y, w, h, n, p], k) => {
    for (let i = 0; i < n; i++) {
      out.push(
        <rect
          key={`${k}-${i}`}
          x={Math.round(x + r() * w)}
          y={Math.round(y + r() * h)}
          width={1 + Math.floor(r() * 4)}
          height={1 + Math.floor(r() * 3)}
          fill={p[Math.floor(r() * p.length)]}
        />,
      );
    }
  });
  return <g shapeRendering="crispEdges">{out}</g>;
}

const FLOOR =
  "M766 545L776 538 782 515 792 500H885V482L890 484 894 494 912 495 926 506 930 514 945 516H990L1002 514 1006 505 1013 502 1012 494 1018 488 1027 482 1040 473 1054 474 1066 466 1080 466 1081 480 1078 492 1087 500 1088 507 1098 508 1100 516 1117 518 1110 622 1126 611 1174 604 1178 610 1150 616 1140 622 1141 708 1127 714 1126 722 1146 732 1126 746 1126 758 1133 770 1131 793H1042L1037 751 1018 748 990 746 860 748 856 736 820 730 800 700 766 680z";

function PointCloud() {
  return (
    <svg viewBox="520 396 680 410" width="680" height="410" role="img" aria-label="Point cloud floor plan">
      <defs>
        <linearGradient id="floor" x1="766" y1="0" x2="1140" y2="0" gradientUnits="userSpaceOnUse">
          <stop stopColor="#7b7e7c" /><stop offset=".235" stopColor="#81837e" /><stop offset=".24" stopColor="#716e73" />
          <stop offset=".6" stopColor="#6c6a78" /><stop offset="1" stopColor="#666674" />
        </linearGradient>
        <radialGradient id="violet" cx="1030" cy="550" r="95" gradientUnits="userSpaceOnUse">
          <stop stopColor="#5f5e90" stopOpacity=".8" /><stop offset="1" stopColor="#5f5e90" stopOpacity="0" />
        </radialGradient>
        <radialGradient id="violet2" cx="970" cy="735" r="55" gradientUnits="userSpaceOnUse">
          <stop stopColor="#443e6c" /><stop offset="1" stopColor="#443e6c" stopOpacity="0" />
        </radialGradient>
        <radialGradient id="green" cx="1085" cy="750" r="90" gradientUnits="userSpaceOnUse">
          <stop stopColor="#5f6c6c" /><stop offset="1" stopColor="#5f6c6c" stopOpacity="0" />
        </radialGradient>
        <linearGradient id="bench" x1="0" y1="0" x2="1" y2="1">
          <stop stopColor="#a09c88" /><stop offset="1" stopColor="#a89c98" />
        </linearGradient>
        <linearGradient id="sheen" x1="0" y1="0" x2="1" y2="1">
          <stop stopColor="#8e9ad4" /><stop offset=".5" stopColor="#767c94" /><stop offset="1" stopColor="#747c74" />
        </linearGradient>
        <clipPath id="floorClip"><path d={FLOOR} /></clipPath>
        <filter id="grain" x="-5%" y="-5%" width="110%" height="110%" colorInterpolationFilters="sRGB">
          <feTurbulence type="fractalNoise" baseFrequency="0.22" numOctaves="4" seed="4" result="n" />
          <feColorMatrix in="n" type="matrix" values="1 0 0 0 0  .8 .2 0 0 0  .7 0 .3 0 0  0 0 0 0 1" result="g" />
          <feDisplacementMap in="SourceGraphic" in2="n" scale="4" xChannelSelector="R" yChannelSelector="G" result="d" />
          <feComposite in="d" in2="g" operator="arithmetic" k1="0" k2="1" k3=".26" k4="-.13" result="m" />
          <feComposite in="m" in2="d" operator="in" />
        </filter>
        <filter id="ragged" x="-5%" y="-5%" width="110%" height="110%">
          <feTurbulence type="fractalNoise" baseFrequency="0.22" numOctaves="3" seed="9" result="n" />
          <feDisplacementMap in="SourceGraphic" in2="n" scale="7" xChannelSelector="R" yChannelSelector="G" />
        </filter>
      </defs>

      <g filter="url(#grain)">
        {/* walls */}
        <path d="M531 448v-35h8M531 476v40M536 449v10M577 408h24M609 411h14M1180 420v240M1180 700v36M766 680v56M1172 700v40h6" stroke="#77786f" strokeWidth="2" fill="none" />
        <path d="M655 410h90M745 410h25" stroke="#25336c" strokeWidth="3" />
        <path d="M686 408h60" stroke="#25336c" strokeWidth="3" />
        <path d="M768 409h64v8l6 6h14l4-8h6v-6h100" stroke="#7c7d72" strokeWidth="3" fill="none" />
        <path d="M960 408h84M1130 408h30l14 16" stroke="#8b8d84" strokeWidth="3" fill="none" />
        <path d="M1044 409h86" stroke="#2c429a" strokeWidth="2" />

        {/* upper left objects */}
        <path d="M606 413h93l1 12-6 15-22-8 6-3-16-8-32-3-20 2h-11v-3z" fill="#a39484" />
        <path d="M591 424h16M591 431h14" stroke="#8d8072" strokeWidth="2" />
        <path d="M704 415l18-4 7 18-14 10-6-4v-14z" fill="#333d58" />
        <path d="M746 412h32v10h-32z" fill="#9e8d7c" /><path d="M776 418l6-2-2 8z" fill="#8f5560" />
        <path d="M787 411h42v24h-43z" fill="#b93c50" /><path d="M789 412h6v20h-6z" fill="#c9b0aa" /><path d="M825 411v23" stroke="#7a2f42" />
        <path d="M650 456l70 2v62h-71v-36z" fill="url(#bench)" />
        <path d="M701 459h20v60h-20z" fill="#b0a282" />
        <path d="M702 450v64" stroke="#55524e" strokeWidth="3" /><path d="M720 448v70" stroke="#c8bf38" strokeWidth="2" />
        <path d="M651 476l8-8 4 10-10 8z" fill="#c6d8d8" /><path d="M651 470l6 2-4 12z" fill="#3d2f6e" />
        <path d="M651 449l6 2 1 10h-9z" fill="#ae9d8a" />
        <path d="M645 468l24-8M665 456l30 6" stroke="#87675c" strokeWidth="3" />
        <path d="M658 453h55M690 450h40" stroke="#2b2e5c" strokeWidth="3" />
        <path d="M668 466l12-5 5 6-6 9-9-1z" fill="#7d8a72" />
        <path d="M681 501l8-8" stroke="#333" strokeWidth="2" />
        <path d="M722 468l18 1 12 8 10 10-10-1-4 8h-26z" fill="#66606c" /><path d="M722 488h22v6h-22z" fill="#8b887c" />
        <path d="M748 478l14 9" stroke="#4a4a52" strokeWidth="5" />
        <path d="M617 472v44" stroke="#b3a8a4" strokeWidth="2" /><path d="M623 469l8-1 3 6v14l-4 6 4 4v18l-10 1-2-12 4-6z" fill="#b3a8a4" />
        <path d="M766 474l18-2 16-6-4 14-12 12-10-4z" fill="#7d7270" />
        <path d="M755 492l34 14-10 20-32-13z" fill="#32518f" /><path d="M757 494l28 11-4 8-28-12z" fill="#647487" />
        <path d="M762 509l14 3-2 8-13-5z" fill="#b5c0cf" /><path d="M752 506l5 2-2 4-4-2z" fill="#c25a6c" />
        <path d="M789 506l-14 34" stroke="#1d3a85" strokeWidth="4" />
        <path d="M718 520l44 18v5l-28-12z" fill="#2c2f3c" /><path d="M744 515l24 10M744 521l10 4" stroke="#25293c" strokeWidth="4" />
        <circle cx="786" cy="493" r="8" fill="#6a5a78" stroke="#414c70" strokeWidth="3" />
        <path d="M797 482q8 6 4 16h-6" stroke="#1d2c62" strokeWidth="4" fill="none" />

        {/* floor */}
        <path d={FLOOR} fill="url(#floor)" />
        <g clipPath="url(#floorClip)">
          <path d="M930 450h190v200H930z" fill="url(#violet)" />
          <path d="M900 680h130v70H900z" fill="url(#violet2)" />
          <path d="M995 660h138v134H995z" fill="url(#green)" />
        </g>
      </g>

      {/* gaps in the scan */}
      <g fill="#fff" filter="url(#ragged)">
        <path d="M772 606l16-4 8 8-4 10-4 4v24H770zM804 612l8 20 -6 8zM768 656l22 2 4 12-26 2zM768 674l16 4v50l-3 20h-16zM809 640l4 18 20 8-22-4z" />
        <path d="M790 744l2-30 42-10v24l20 4 2 18zM867 714l18 8 22 2 2 8 12 12-50 4-6-8zM934 722l14 6 10 4-16 12-30 2zM1014 716l8 12v20l-30-2z" />
        <path d="M862 654l8-8 10 6-4 12-10 2zM842 652l14 14-10-2z" />
        <path d="M1008 552l14-10 6 6 2 10-10 4zM990 542l8 4-4 6z" />
        <path d="M1144 640h30v46h-32zM1116 608l20-6 36-2-50 12zM1136 724l46-16v46h-50l10-12z" />
      </g>

      <g filter="url(#grain)">
        {/* upper middle objects */}
        <path d="M845 445h56v21h-56z" fill="#8f96a6" /><path d="M863 438l28-2 2 30-26 6z" fill="#6f7c84" /><path d="M870 440h12v28h-12z" fill="#4e5560" />
        <path d="M884 466l10-30" stroke="#2a2e3c" strokeWidth="4" />
        <path d="M908 414h10v20h4v4h-20l6-8z" fill="#2c3040" />
        <circle cx="945" cy="435" r="12" fill="none" stroke="#64767c" strokeWidth="4" />
        <path d="M955 444q-6 26-24 28-24-2-24 10c2 10 24 2 25 14q0 12-4 22" stroke="#414c54" strokeWidth="4" fill="none" />
        <path d="M948 458l10 2-6 8z" fill="#6c625e" />
        <circle cx="1007" cy="429" r="12" fill="none" stroke="#3d4a5c" strokeWidth="3" />
        <path d="M980 432l10 6h12l10-8" stroke="#555e64" strokeWidth="6" fill="none" />
        <path d="M974 446l6 24 12 6 8 2M984 450l4 20" stroke="#9b6068" strokeWidth="3" fill="none" />
        <path d="M1039 432v26M1060 432v16M1040 451h78M1110 438v18M1114 438v18" stroke="#77705a" strokeWidth="3" />
        <path d="M1072 444l10-1v6h-10z" fill="#a29a80" />

        {/* benches */}
        <path d="M902 517h44l-4 101-44-2z" fill="#bac0b0" />
        <path d="M914 540l34 22-10 4z" fill="#e2eaf2" />
        <path d="M946 516h39l-2 46h-38z" fill="#5b6680" />
        <path d="M944 565h40l-1 53h-41z" fill="url(#sheen)" />
        <path d="M962 532h8v10h-8z" fill="#a9b4c4" /><path d="M971 549h11v7h-11z" fill="#c4b8a0" />
        <path d="M936 559l50 4M935 563l40 2" stroke="#40404e" strokeWidth="3" /><path d="M940 560h54" stroke="#9c4c66" />
        <path d="M930 584l40 2M944 592l26 2" stroke="#50564c" strokeWidth="2" />
        <path d="M898 530l16 10" stroke="#3c3f4c" strokeWidth="4" />
        <path d="M1068 515l4-5 45 7-8 104-49-5z" fill="#a59e9a" />
        <path d="M1063 560l22-30 6-14-20-4-6 20z" fill="#a39689" /><path d="M1076 567l6 8" stroke="#38405e" strokeWidth="4" />
        <circle cx="1027" cy="470" r="9" fill="#262b45" /><circle cx="1032" cy="480" r="9" fill="#7d6c94" /><circle cx="1032" cy="479" r="6" fill="none" stroke="#cc5a76" strokeWidth="2" />

        {/* right edge */}
        <path d="M1179 439h-9v33h10" stroke="#a8214e" strokeWidth="2" fill="none" />
        <path d="M1156 442h5v90h-5z" fill="#6a5a66" /><path d="M1158 500h6v60h-6z" fill="#6c7890" />
        <path d="M1138 568l4 1v20h14v4h-18z" fill="#6e787c" /><path d="M1143 570h11v14l-10 3z" fill="#b3aaa8" />
        <path d="M1110 622l68-18v6l-50 14z" fill="#5c5878" />
        <path d="M1123 606q10-8 18-4l-8 4z" fill="#4e4868" />
        <circle cx="1143" cy="625" r="10" fill="#6d7c86" /><path d="M1140 625h14M1160 624h14" stroke="#33384c" strokeWidth="3" /><path d="M1152 624h16" stroke="#a87840" strokeWidth="3" />
        <path d="M1141 638h36M1142 638v54M1142 688h30" stroke="#7c7468" strokeWidth="2" />
        <path d="M1142 694l34-4M1144 702l32-4M1176 660l4 30M1170 650l8 10" stroke="#94807c" strokeWidth="4" />
        <path d="M1143 712v16" stroke="#a8a85c" strokeWidth="3" /><path d="M1128 716q4 16 18 16" stroke="#86244c" strokeWidth="2" fill="none" />
        <path d="M1125 746l32-14" stroke="#8ba0ac" strokeWidth="4" /><path d="M1144 730l20-8 4-4-14 2z" fill="#a8b4a4" />

        {/* lower left and bottom objects */}
        <path d="M768 582q30 14 38 30t2 28" stroke="#7c757e" strokeWidth="8" fill="none" />
        <path d="M773 606a13 13 0 0 1 24 0q2 10-8 12" fill="none" stroke="#585670" strokeWidth="4" />
        <path d="M788 620l8 12-2 16-6-4z" fill="#7e7c50" /><path d="M790 648q6 10 4 18M766 648l18 4" stroke="#4b4668" strokeWidth="4" fill="none" />
        <path d="M807 654l36 18" stroke="#353a50" strokeWidth="5" />
        <path d="M786 685l30-3-1 30-28 6z" fill="#8c7a70" /><path d="M788 684v34" stroke="#9a967c" strokeWidth="4" />
        <path d="M818 680h14v22l-14 4zM790 718l8-2-8 34h-6zM802 712l10-2 1 32-13 2z" fill="#2c3158" />
        <path d="M812 728l40 6M846 728q14-2 16 20" stroke="#6f7c7c" strokeWidth="4" fill="none" />
        <path d="M861 702l14-14 25 18-18 22z" fill="#98826e" /><path d="M866 702l12-10 18 14-14 10z" fill="#b59a80" />
        <path d="M866 702l20 6-2 10-14-4z" fill="#5a4c64" /><path d="M886 724l-14 13" stroke="#423a6c" strokeWidth="6" />
        <path d="M841 645l20 18" stroke="#353c54" strokeWidth="4" />
        <path d="M864 652a13 13 0 1 1 24 4" fill="none" stroke="#c06058" strokeWidth="3" />
        <path d="M870 640l14 10" stroke="#a8504c" strokeWidth="3" />
        <path d="M884 630q14-8 12 10-4 16-22 30" stroke="#353a60" strokeWidth="4" fill="none" />
        <circle cx="906" cy="634" r="10" fill="none" stroke="#51505e" strokeWidth="2.500" />
        <path d="M896 652l38 34" stroke="#494a50" strokeWidth="3" />
        <path d="M933 686h28v30h-28z" fill="#687c84" /><path d="M933 687h28v27h-28z" stroke="#9fb4ac" fill="none" strokeWidth="1.500" />
        <path d="M941 696l8 2" stroke="#b87048" strokeWidth="4" /><path d="M933 715h30" stroke="#93a69e" strokeWidth="4" /><path d="M942 718v10M948 718v12" stroke="#667" strokeWidth="2" />
        <path d="M930 720q-6 14-20 16" stroke="#465062" strokeWidth="6" fill="none" />
        <path d="M1000 700l8 10-16 16M1004 712l28 24" stroke="#7c8e88" strokeWidth="5" fill="none" /><path d="M1008 716l10 10" stroke="#333846" strokeWidth="5" />
        <path d="M992 728q10 12-4 16l-60 2" stroke="#39395c" strokeWidth="4" fill="none" />
        <path d="M856 750h140M996 748h42M768 751h66" stroke="#6f716c" strokeWidth="2" />
      </g>
      <Debris />
      <path d="M795 495a45 45 0 0 0 90 0l-6-12q-40-14-76 0z" fill="#fff" />
      <circle cx="840" cy="498" r="45" fill="#fff" />
      <circle cx="1025" cy="641" r="45" fill="#fff" />
    </svg>
  );
}

/* ---------- canvas area ---------- */

const VIEW_ICONS: [string, React.ReactNode][] = [
  ["Detail level", <Svg key="a" w={18} h={16}><path d="M1.500 2.500h15v11h-15z" fill="#e6e9ef" stroke="#555e6a" /></Svg>],
  ["Visual style", <Svg key="b" w={18} h={16}><path d="M1.500 6.500l4-4h11v6l-4 4h-11zM1.500 6.500h11v6M12.500 6.500l4-4" fill="#f2f3f5" stroke={INK} /></Svg>],
  ["Sun path", <Svg key="c" w={18} h={16}><circle cx="7" cy="7" r="4" fill="#fde88a" stroke="#d08a1a" /><path d="M7 0v2M7 12v2M0 7h2M2 2l1.500 1.500M12 2l-1.500 1.500M2 12l1.500-1.500" stroke="#d08a1a" /><RedX x={9} y={8} /></Svg>],
  ["Shadows", <Svg key="d" w={18} h={16}><circle cx="7" cy="6" r="4.500" fill="#bfe0f6" stroke="#3b7cb4" /><path d="M3 12.500h7" stroke="#555" strokeWidth="2" /><RedX x={10} y={8} /></Svg>],
  ["Crop view", <Svg key="e" w={18} h={16}><path d="M3.500 14V4.500H14M0 12h8" stroke="#2a6fb0" strokeWidth="1.500" /><path d="M7 7h6v5H7z" stroke={INK} /><RedX x={10} y={8} /></Svg>],
  ["Crop region", <Svg key="f" w={18} h={16}><path d="M3.500 14V4.500H14M0 12h8M6 8h4" stroke="#2a6fb0" strokeWidth="1.500" /><circle cx="13.500" cy="6" r="2.800" fill="#d8ecfa" stroke="#2a6fb0" /><path d="M13.500 9v5" stroke="#444" strokeWidth="2" /></Svg>],
  ["Hide or isolate", <Svg key="g" w={18} h={16}><path d="M1 5l5 6M17 4l-3-1-2 3" stroke={INK} /><circle cx="7.500" cy="11" r="2.800" fill="#fff" stroke={INK} /><circle cx="13" cy="8.500" r="2.800" fill="#fff" stroke={INK} /></Svg>],
  ["Reveal hidden", <Svg key="h" w={18} h={16}><circle cx="9" cy="6.500" r="3" fill="#d8ecfa" stroke="#2a6fd0" /><path d="M9 10v4" stroke="#335" strokeWidth="2" /></Svg>],
  ["View properties", <Svg key="i" w={18} h={16}><path d="M2.500 3.500h12v9h-12z" fill="#e8e8e8" stroke="#222" strokeWidth="1.500" strokeDasharray="2 1" /><circle cx="12.500" cy="10.500" r="3" fill="#fff" stroke="#111" /><circle cx="12.500" cy="10.500" r="1" fill="#111" /></Svg>],
  ["Analytical model", <Svg key="j" w={18} h={16}><path d="M1.500 13V5l6-3v11M1.500 9h8M4.500 4v9" stroke={INK} /><path d="M4 7v6M8 7v6" stroke="#c22" strokeWidth="1.500" /><circle cx="13" cy="6.500" r="3.500" fill="#f7a63b" /><path d="M13 10v4" stroke="#444" strokeWidth="2" /></Svg>],
  ["Constraints", <Svg key="k" w={18} h={16}><path d="M2.500 1v13M16.500 1v6M2.500 4h14M3 11h6" stroke={INK} strokeDasharray="2 .6" /><path d="M10 9h7v5h-7z" fill="#444" /><path d="M11.500 9V7.500h4V9" stroke="#444" /></Svg>],
];

function Workspace() {
  return (
    <main className="flex min-w-0 flex-1 flex-col border-l-2 border-[#c9c9c9] bg-white">
      <div className="flex h-[22px] shrink-0 items-end bg-[#cbcbcb] text-[12px] text-[#3c3c3c]">
        <button className="flex h-5 w-[128px] items-center gap-[7px] pl-[6px]">
          <Svg w={14} h={14}>
            <path d="M7 1L0 7.500h2V13h3.500V9h3v4H12V7.500h2z" fill="#7d7d7d" />
          </Svg>
          East
        </button>
        <div className="flex h-5 w-[128px] items-center bg-white pl-1">
          <button className="flex items-center gap-[7px] font-bold text-[#222]">
            <Svg w={16} h={16}>
              <path d="M1.500 1.500h8v1h4v11H1.500z" fill="#e6e9ee" stroke={INK} />
              <path d="M6.500 6.500h9v8h-9z" fill="#fff" stroke={INK} />
            </Svg>
            Level 1
          </button>
          <button aria-label="Close Level 1" className="ml-auto pr-[5px]"><Close /></button>
        </div>
        <button aria-label="View list" className="mr-1 mb-[5px] ml-auto">
          <Svg w={10} h={8}>
            <path d="M1 1h8" stroke="#111" strokeWidth="1.500" />
            <path d="M1 3.500h8L5 8z" fill="#111" />
          </Svg>
        </button>
      </div>
      <div className="flex min-h-0 flex-1">
        <div className="relative min-w-0 flex-1">
          <div className="absolute top-[203px] left-[159px]">
            <PointCloud />
          </div>
          <div className="absolute top-[2px] right-[1px] flex h-[117px] w-9 flex-col items-center justify-between rounded-[5px] border-2 border-[#bdbdbd] bg-[#f4f4f4] py-[2px]">
            <button aria-label="Close navigation bar" className="self-end">
              <Svg w={10} h={10}><circle cx="5" cy="5" r="3.500" fill="#ddd" stroke="#aaa" /><path d="M3.500 3.500l3 3M6.500 3.500l-3 3" stroke="#888" /></Svg>
            </button>
            <button aria-label="Steering wheel">
              <Svg w={26} h={24}>
                <path d="M3 11c0-6 3-9 9-9h6v9c0 6-3 8-7 8s-8-3-8-8z" fill="#e6e8ea" stroke="#a0a5aa" strokeWidth="1.300" />
                <circle cx="11" cy="10" r="4.500" fill="#f6f6f6" stroke="#a0a5aa" />
                <text x="13" y="23" fontSize="10" fontFamily="Liberation Sans" fill="#5b8fc0" fontWeight="bold">2D</text>
              </Svg>
            </button>
            <Tri c="#999" />
            <span className="h-px w-[26px] bg-[#c4c4c4]" />
            <button aria-label="Zoom region">
              <Svg w={18} h={18}>
                <path d="M1.500 1.500h11v11h-11z" fill="#b7d3a6" stroke="#8fb37a" />
                <circle cx="11.500" cy="10.500" r="3.500" fill="#f3f3f3" stroke="#a0a5aa" /><path d="M14 13l3 4" stroke="#a0a5aa" strokeWidth="2" />
              </Svg>
            </button>
            <Tri c="#999" />
            <button aria-label="Navigation bar options" className="self-end">
              <Svg w={10} h={10}><circle cx="5" cy="5" r="3.500" fill="#e4e4e4" stroke="#aaa" /><path d="M3 5h4" stroke="#888" /></Svg>
            </button>
          </div>
        </div>
        <div className="flex w-4 items-center justify-center bg-[#eeeeee]">
          <span className="h-[17px] w-[2px] bg-[#868686]" />
        </div>
      </div>
      <div className="mb-[2px] flex h-4 shrink-0 items-center bg-[#efefef] pr-1 text-[12px]">
        <span className="w-[80px] pl-[27px] text-[#111]">1 : 96</span>
        <div className="flex w-[228px] justify-between">
          {VIEW_ICONS.map(([n, i]) => (
            <button key={n} aria-label={n}>{i}</button>
          ))}
        </div>
        <span className="mx-auto h-[2px] w-[17px] bg-[#868686]" />
        <Svg w={10} h={10}>
          <path d="M6 1h3v2H6zM3 4h2v2H3zM6 4h3v2H6zM0 7h2v2H0zM3 7h2v2H3zM6 7h3v2H6z" fill="#b5b5b5" />
        </Svg>
      </div>
    </main>
  );
}

function StatusSelect({ label, value }: { label: string; value: string }) {
  return (
    <div className="relative w-[204px]">
      <select aria-label={label} className="h-[18px] w-full appearance-none bg-white pl-[3px] text-[12px] text-[#8a8a8a]">
        <option>{value}</option>
      </select>
      <span className="pointer-events-none absolute top-0 right-0 flex h-[18px] w-[17px] items-center justify-center border-l border-[#e8e8e8]"><Chevron /></span>
    </div>
  );
}

function StatusBar() {
  return (
    <footer className="flex h-[23px] items-center bg-[#cbcbcb] pt-px text-[12px] text-[#111]">
      <p className="w-[895px] pl-[2px]">Click to select, TAB for alternates, CTRL adds, SHIFT unselects.</p>
      <button aria-label="Worksets" className="mr-[7px]">
        <Svg w={18} h={18}>
          <path d="M6.500 3.500h8v5h-8z" fill="#cfe8c8" stroke="#2c7a2c" strokeWidth="1.500" />
          <path d="M1.500 8.500l3.500-2 4 2v6l-4 2-3.500-2zM5 10.500v6" fill="#9fd0f2" stroke="#1f6cb4" strokeWidth="1.300" />
          <path d="M13 9v7M11.500 8l1.500 2 1.500-2" stroke={INK} strokeWidth="2" />
        </Svg>
      </button>
      <StatusSelect label="Active workset" value="" />
      <div className="flex flex-1 items-center">
        <button aria-label="Editing requests" className="ml-2 flex w-[40px] items-center gap-[3px]">
          <Svg w={18} h={18}>
            <path d="M5.500 2.500h10v4h-10z" fill="#ddd" stroke="#8c8c8c" /><path d="M9 7l-2 5M1 16l3-6 5 6z" fill="#8c8c8c" stroke="#8c8c8c" />
          </Svg>
          :0
        </button>
        <button aria-label="Design options" className="ml-[13px]">
          <Svg w={18} h={18}>
            <path d="M1.500 2.500h15v14h-15z" fill="#f0f1f3" stroke={INK} /><path d="M1 2h16v3H1z" fill={INK} />
            <path d="M3.500 8.500h3M6.500 11.500h8M8 8.500h6.500M6.500 14h8M4.500 9v5h2" stroke={INK} />
          </Svg>
        </button>
        <button aria-label="Pick to edit" className="mr-[7px] ml-2">
          <Svg w={18} h={18}>
            <path d="M4 1h13v16h-7v-5H4z" fill="#9c9c9c" /><path d="M1 11h7M5.500 7.500L9 11l-3.500 3.500" stroke="#f0f0f0" strokeWidth="2.500" /><path d="M1 11h7M5.500 8L8.500 11l-3 3" stroke="#8a8a8a" />
          </Svg>
        </button>
        <StatusSelect label="Design option" value="Main Model" />
      </div>
      <div className="flex items-center gap-2 pr-[72px]">
        <button aria-label="Select links"><Svg><rect x="1" y="3" width="8" height="5" rx="2.500" stroke="#d19a10" strokeWidth="2" /><rect x="8" y="3" width="8" height="5" rx="2.500" stroke="#e8b41e" strokeWidth="2" /><Cursor x={7} y={6} /></Svg></button>
        <button aria-label="Select underlay"><Svg><path d="M1 9l8-7v7zM2 13h8" fill="#cfe4f6" stroke="#2a78c4" strokeWidth="1.300" /><RedX x={11} y={1} /><Cursor x={9} y={6} /></Svg></button>
        <button aria-label="Select pinned"><Svg><path d="M2.500 2.500h8v2h-1v4l2 3h-9l1-3v-4h-1zM6.500 12v5" fill="#f08a3c" stroke="#b8481c" /><Cursor x={10} y={6} /></Svg></button>
        <button aria-label="Select by face"><Svg><path d="M2.500 4.500l8-2.500v10l-8 4z" fill="#9fd0f2" stroke="#1f6cb4" /><RedX x={11} y={1} /><Cursor x={9} y={6} /></Svg></button>
        <button aria-label="Drag elements"><Svg><path d="M5.500 1v9M1 5.500h9M4 2.500L5.500 1 7 2.500M4 8.500L5.500 10 7 8.500M2.500 4L1 5.500 2.500 7M8.500 4L10 5.500 8.500 7" stroke="#111" /><Cursor x={9} y={7} /></Svg></button>
        <button aria-label="Background processes"><Svg><circle cx="8.500" cy="9" r="5" stroke="#969696" strokeWidth="3" strokeDasharray="2.800 1.130" /></Svg></button>
        <button aria-label="Filter selection" className="-ml-[2px] flex items-center text-[#444]"><Svg><path d="M1.500 3.500h15l-5.500 6V16l-4-2V9.500z" fill="#b9bdc4" stroke="#5a616c" /></Svg>:0</button>
      </div>
    </footer>
  );
}

export default function App() {
  return (
    <div className="flex h-screen min-h-[800px] flex-col overflow-hidden border-r border-[#222] bg-[#eeeeee] font-['Roboto',sans-serif]">
      <TitleBar />
      <RibbonTabs />
      <Ribbon />
      <div className="h-[26px] shrink-0 bg-[#eeeeee]" />
      <div className="flex min-h-0 flex-1">
        <aside className="flex w-[359px] shrink-0 flex-col border-t-2 border-[#c9c9c9]">
          <Properties />
          <Browser />
        </aside>
        <Workspace />
      </div>
      <StatusBar />
    </div>
  );
}
